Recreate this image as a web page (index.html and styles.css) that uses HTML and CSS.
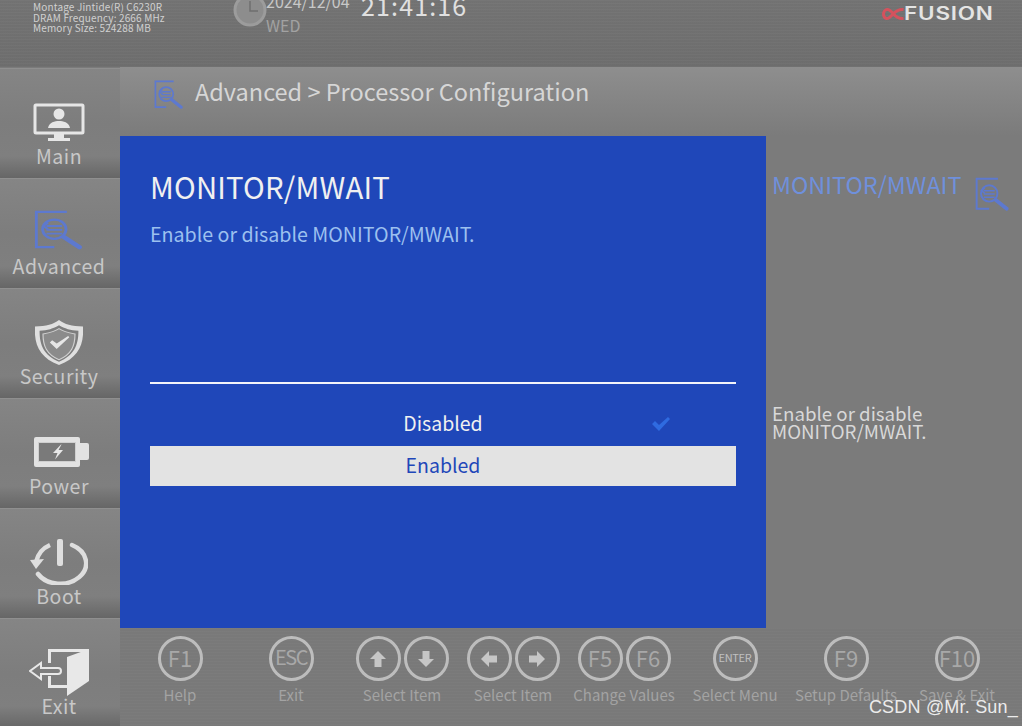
FILE: index.html
```html
<!DOCTYPE html>
<html lang="en">
<head>
<meta charset="utf-8">
<title>Processor Configuration</title>
<link rel="stylesheet" href="styles.css">
</head>
<body>
<svg class="defs" width="0" height="0" aria-hidden="true">
  <symbol id="doc-search" viewBox="0 0 32 32" preserveAspectRatio="none">
    <path d="M21 1.500H1.500v27.500H13" fill="none" stroke="currentColor" stroke-width="1.800"/>
    <circle cx="13" cy="15" r="7.500" fill="none" stroke="currentColor" stroke-width="1.800"/>
    <path d="M8 12.500h10M8 15.500h10M8 18.500h10" fill="none" stroke="currentColor" stroke-width="1.400"/>
    <path d="M9 10l-3 2.500 3 2.500" fill="none" stroke="currentColor" stroke-width="1.400"/>
    <path d="M19 21l10 8" fill="none" stroke="currentColor" stroke-width="3.400" stroke-linecap="round"/>
  </symbol>
</svg>
<div class="screen">
  <header class="topbar">
    <div class="sysinfo">
      <div>Montage Jintide(R) C6230R</div>
      <div>DRAM Frequency: 2666 MHz</div>
      <div>Memory Size: 524288 MB</div>
    </div>
    <svg class="clock" viewBox="0 0 34 34">
      <circle cx="17" cy="17" r="15" fill="#8d8d8d" stroke="#9c9c9c" stroke-width="3"/>
      <path d="M17 8v10h8" fill="none" stroke="#6f6f6f" stroke-width="1.500"/>
    </svg>
    <div class="date">
      <div class="date-day">2024/12/04</div>
      <div class="date-week">WED</div>
    </div>
    <div class="time">21:41:16</div>
    <div class="logo">
      <svg class="logo-mark" viewBox="0 0 22 14">
        <path d="M21.500 2.500C17 2 14 4 11 7 8 10.500 6 12 4.500 11.500 2 11 1.500 9 1.500 7S3 2.700 5 2.500c2-.2 4 1.500 6.500 4.500 3 3.500 5.500 5 10 4.500" fill="none" stroke="#d5525d" stroke-width="3"/>
      </svg>
      <span class="logo-text">FUSION</span>
    </div>
  </header>
  <div class="body">
    <nav class="sidebar">
      <div class="nav-item">
        <svg class="nav-icon" viewBox="0 0 52 40">
          <path d="M3 2h46a1 1 0 0 1 1 1v26a1 1 0 0 1-1 1H3a1 1 0 0 1-1-1V3a1 1 0 0 1 1-1z" fill="none" stroke="#e6e6e6" stroke-width="3"/>
          <circle cx="26" cy="11" r="5.500" fill="#e6e6e6"/>
          <path d="M15 25c1-6 7-7 11-7s10 1 11 7z" fill="#e6e6e6"/>
          <path d="M21 31h10v4h6v3H15v-3h6z" fill="#e6e6e6"/>
        </svg>
        <span class="nav-label">Main</span>
      </div>
      <div class="nav-item">
        <svg class="nav-icon nav-icon-search"><use href="#doc-search"/></svg>
        <span class="nav-label">Advanced</span>
      </div>
      <div class="nav-item">
        <svg class="nav-icon nav-icon-shield" viewBox="5 1 42 42" preserveAspectRatio="none">
          <path d="M26 1c5 4 11 6 21 6 1 17-4 29-21 36C9 36 4 24 5 7c10 0 16-2 21-6z" fill="#e0e0e0"/>
          <path d="M26 6c5 3 10 5 17 5 0 14-4 23-17 29C13 34 9 25 9 11c7 0 12-2 17-5z" fill="#7d7d7d"/>
          <path d="M26 9c4 3 9 4 14 5 0 11-3 19-14 24-11-5-14-13-14-24 5-1 10-2 14-5z" fill="#8b8b8b" stroke="#d0d0d0" stroke-width="1"/>
          <path d="M18 22l6 6 11-11-1-1-10 7-4-3z" fill="#e6e6e6"/>
        </svg>
        <span class="nav-label">Security</span>
      </div>
      <div class="nav-item">
        <svg class="nav-icon nav-icon-battery" viewBox="0 0 56 32">
          <path d="M3 1h42a2 2 0 0 1 2 2v26a2 2 0 0 1-2 2H3a2 2 0 0 1-2-2V3a2 2 0 0 1 2-2z" fill="#e2e2e2"/>
          <path d="M47 7h7a2 2 0 0 1 2 2v13a2 2 0 0 1-2 2h-7z" fill="#e2e2e2"/>
          <rect x="5.500" y="6.500" width="37" height="19" fill="#7a7a7a" stroke="#cfcfcf" stroke-width="1"/>
          <path d="M28 8.500l-8 8.500h4.500l-2.500 6.500 8-9.500h-4.500l3-5.500z" fill="#e8e8e8"/>
        </svg>
        <span class="nav-label">Power</span>
      </div>
      <div class="nav-item">
        <svg class="nav-icon nav-icon-boot" viewBox="0 0 58 47">
          <rect x="27" y="1" width="6" height="27" rx="2" fill="#dedede"/>
          <path d="M42 7A26 20.500 0 1 1 8 36" fill="none" stroke="#dedede" stroke-width="4.500" stroke-linecap="round"/>
          <path d="M20 7C13 10 8 15 6 24" fill="none" stroke="#dedede" stroke-width="4.500"/>
          <path d="M0 22l14-1-8 10z" fill="#dedede"/>
        </svg>
        <span class="nav-label">Boot</span>
      </div>
      <div class="nav-item">
        <svg class="nav-icon nav-icon-exit" viewBox="0 0 60 47">
          <path d="M19 0h41v3H22v11h-3zM19 27h3v9h16v3H19z" fill="#e8e8e8"/>
          <path d="M38 8l22-8v32L38 47z" fill="#e8e8e8"/>
          <path d="M12 14v5h17a3 3 0 0 1 0 6H12v5L1 22z" fill="none" stroke="#e8e8e8" stroke-width="2"/>
        </svg>
        <span class="nav-label">Exit</span>
      </div>
    </nav>
    <main class="main">
      <div class="crumbs">
        <svg class="crumb-icon"><use href="#doc-search"/></svg>
        <span>Advanced &gt; Processor Configuration</span>
      </div>
      <div class="content">
        <aside class="help">
          <div class="help-head">
            <span class="help-title">MONITOR/MWAIT</span>
            <svg class="help-icon"><use href="#doc-search"/></svg>
          </div>
          <p class="help-text">Enable or disable MONITOR/MWAIT.</p>
        </aside>
      </div>
      <footer class="keys">
        <div class="key"><div class="key-rings"><span class="ring">F1</span></div><span class="key-label">Help</span></div>
        <div class="key"><div class="key-rings"><span class="ring ring-esc">ESC</span></div><span class="key-label">Exit</span></div>
        <div class="key"><div class="key-rings">
          <span class="ring"><svg class="arrow" viewBox="0 0 20 20"><path d="M10 2l8 8h-4.500v8h-7v-8H2z"/></svg></span>
          <span class="ring"><svg class="arrow" viewBox="0 0 20 20"><path d="M10 18l8-8h-4.500V2h-7v8H2z"/></svg></span>
        </div><span class="key-label">Select Item</span></div>
        <div class="key"><div class="key-rings">
          <span class="ring"><svg class="arrow" viewBox="0 0 20 20"><path d="M2 10l8-8v4.500h8v7h-8V18z"/></svg></span>
          <span class="ring"><svg class="arrow" viewBox="0 0 20 20"><path d="M18 10l-8-8v4.500H2v7h8V18z"/></svg></span>
        </div><span class="key-label">Select Item</span></div>
        <div class="key"><div class="key-rings"><span class="ring">F5</span><span class="ring">F6</span></div><span class="key-label">Change Values</span></div>
        <div class="key"><div class="key-rings"><span class="ring ring-enter">ENTER</span></div><span class="key-label">Select Menu</span></div>
        <div class="key"><div class="key-rings"><span class="ring">F9</span></div><span class="key-label">Setup Defaults</span></div>
        <div class="key"><div class="key-rings"><span class="ring">F10</span></div><span class="key-label">Save &amp; Exit</span></div>
      </footer>
    </main>
  </div>
  <section class="dialog">
    <h1 class="dialog-title">MONITOR/MWAIT</h1>
    <p class="dialog-text">Enable or disable MONITOR/MWAIT.</p>
    <div class="options">
      <div class="option">Disabled
        <svg class="check" viewBox="0 0 20 16"><path d="M1 8l3-3 4 4 9-8 2 2L8 15z"/></svg>
      </div>
      <div class="option option-selected">Enabled</div>
    </div>
  </section>
  <div class="watermark">CSDN @Mr. Sun_</div>
</div>
</body>
</html>
```
FILE: styles.css
```css
* { box-sizing: border-box; }
html, body { margin: 0; padding: 0; background: #7b7b7b; }
body { font-family: "Noto Sans CJK SC", "Noto Sans", sans-serif; overflow: hidden; }
.defs { position: absolute; }
.screen { position: relative; width: 1022px; height: 726px; overflow: hidden; display: flex; flex-direction: column; }

.topbar {
  height: 67px; flex: none; display: flex; align-items: flex-start; overflow: hidden; position: relative;
  background: repeating-linear-gradient(180deg, rgba(255,255,255,.015) 0 1px, rgba(0,0,0,.015) 1px 3px), linear-gradient(180deg, #747474 0, #6f6f6f 100%);
}
.sysinfo { margin: 2px 0 0 33px; width: 200px; font-size: 10px; line-height: 10.500px; letter-spacing: .15px; color: #d0d0d0; }
.clock { width: 34px; height: 34px; margin: -7px 0 0 0; flex: none; }
.date { width: 95px; margin: -10px 0 0 -1px; }
.date-day { font-size: 16px; line-height: 22px; color: #c8c8c8; }
.date-week { font-size: 16px; line-height: 22px; margin-top: 2px; color: #a2a2a2; }
.time { font-size: 25px; line-height: 30px; margin: -10px 0 0 0; letter-spacing: 1.150px; color: #e0e0e0; }
.logo { position: absolute; top: 4px; right: 28px; display: flex; align-items: center; }
.logo-text { font-family: "Inter", "Liberation Sans", sans-serif; font-weight: 600; font-size: 18px; line-height: 20px; color: #e4e4e4; letter-spacing: .6px; transform: scaleX(1.250); transform-origin: right center; }
.logo-mark { width: 22px; height: 14px; margin-right: 18px; }

.body { flex: 1; display: flex; min-height: 0; }
.sidebar { width: 120px; flex: none; display: flex; flex-direction: column; padding-top: 1px; }
.nav-item {
  height: 110px; flex: none; display: flex; flex-direction: column; align-items: center; justify-content: flex-end; padding: 0 2px 9px 0;
  background: linear-gradient(180deg, #858585 0, #7d7d7d 50%, #7f7f7f 80%, #666666 100%);
  border-top: 1px solid #8f8f8f;
}
.nav-icon { width: 52px; height: 44px; margin-bottom: -2px; }
.nav-icon-search { width: 50px; height: 41px; margin-bottom: 2px; color: #5d79cf; }
.nav-icon-shield { width: 48px; height: 45px; margin-bottom: -2px; }
.nav-icon-battery { width: 56px; height: 32px; margin: 0 -3px 5px 0; }
.nav-icon-boot { width: 58px; height: 47px; margin-bottom: -2px; }
.nav-icon-exit { width: 60px; height: 47px; margin-bottom: -3px; }
.nav-label { font-size: 19.500px; line-height: 26px; letter-spacing: .5px; color: #c8c8c8; }

.main { flex: 1; display: flex; flex-direction: column; min-width: 0; }
.crumbs {
  height: 69px; flex: none; padding: 8px 0 0 34px; display: flex; align-items: flex-start; gap: 11px; font-size: 23.500px; line-height: 32px; color: #d6d6d6;
  background: linear-gradient(180deg, #8e8e8e 0, #7b7b7b 100%);
}
.crumb-icon { width: 30px; height: 30px; margin-top: 5px; color: #5d79cf; }
.content { flex: 1; min-height: 0; background: #7b7b7b; padding-left: 646px; }
.help { padding: 0 0 0 6px; }
.help-head { display: flex; align-items: flex-start; gap: 13px; padding-top: 30px; height: 95px; }
.help-title { font-size: 23.400px; line-height: 36px; color: #6f90dc; }
.help-icon { width: 35px; height: 35px; margin-top: 11px; flex: none; color: #5d79cf; }
.help-text { margin: 172.500px 0 0; font-size: 18.700px; line-height: 18px; color: #d8d8d8; width: 175px; }

.keys {
  height: 98px; flex: none; padding-left: 4.500px; display: grid; grid-template-columns: repeat(8, 111px);
  background: repeating-linear-gradient(180deg, rgba(255,255,255,.012) 0 1px, rgba(0,0,0,.012) 1px 3px), #7a7a7a;
}
.key { display: flex; flex-direction: column; align-items: center; padding-top: 8px; }
.key-rings { display: flex; gap: 3px; height: 46px; }
.ring {
  width: 45px; height: 45px; border-radius: 50%; border: 3px solid #bdbdbd; display: flex; align-items: center; justify-content: center;
  padding-bottom: 3px; font-size: 22px; line-height: 1; color: #a8a8a8;
}
.ring-esc { font-size: 20px; letter-spacing: -1.500px; }
.ring-enter { font-size: 11px; letter-spacing: -.3px; color: #c0c0c0; }
.arrow { width: 20px; height: 20px; margin-top: 3px; fill: #c6c6c6; }
.key-label { margin-top: 1px; font-size: 15px; line-height: 24px; color: #a3a3a3; white-space: nowrap; }

.dialog { position: absolute; left: 120px; top: 136px; width: 646px; height: 492px; background: #1f47b9; padding: 30px; }
.dialog-title { margin: -3px 0 0; font-size: 29.300px; font-weight: 400; line-height: 46px; letter-spacing: .2px; color: #f0f0f0; }
.dialog-text { margin: 10.500px 0 0; font-size: 19.650px; line-height: 28px; color: #9cc0ef; height: 162.500px; }
.options { border-top: 2px solid #f2f4fa; padding-top: 18px; }
.option { position: relative; height: 44px; padding-bottom: 2px; display: flex; align-items: center; justify-content: center; font-size: 19.500px; line-height: 40px; color: #f0f0f0; }
.option-selected { height: 40px; background: #e3e3e3; color: #1f47b9; }
.check { position: absolute; left: 501px; top: 14px; width: 20px; height: 16px; fill: #2f6be0; }

.watermark { position: absolute; right: 4px; top: 696px; font-family: "Liberation Sans", sans-serif; font-size: 18px; line-height: 22px; letter-spacing: .2px; color: #ececec; }
```
